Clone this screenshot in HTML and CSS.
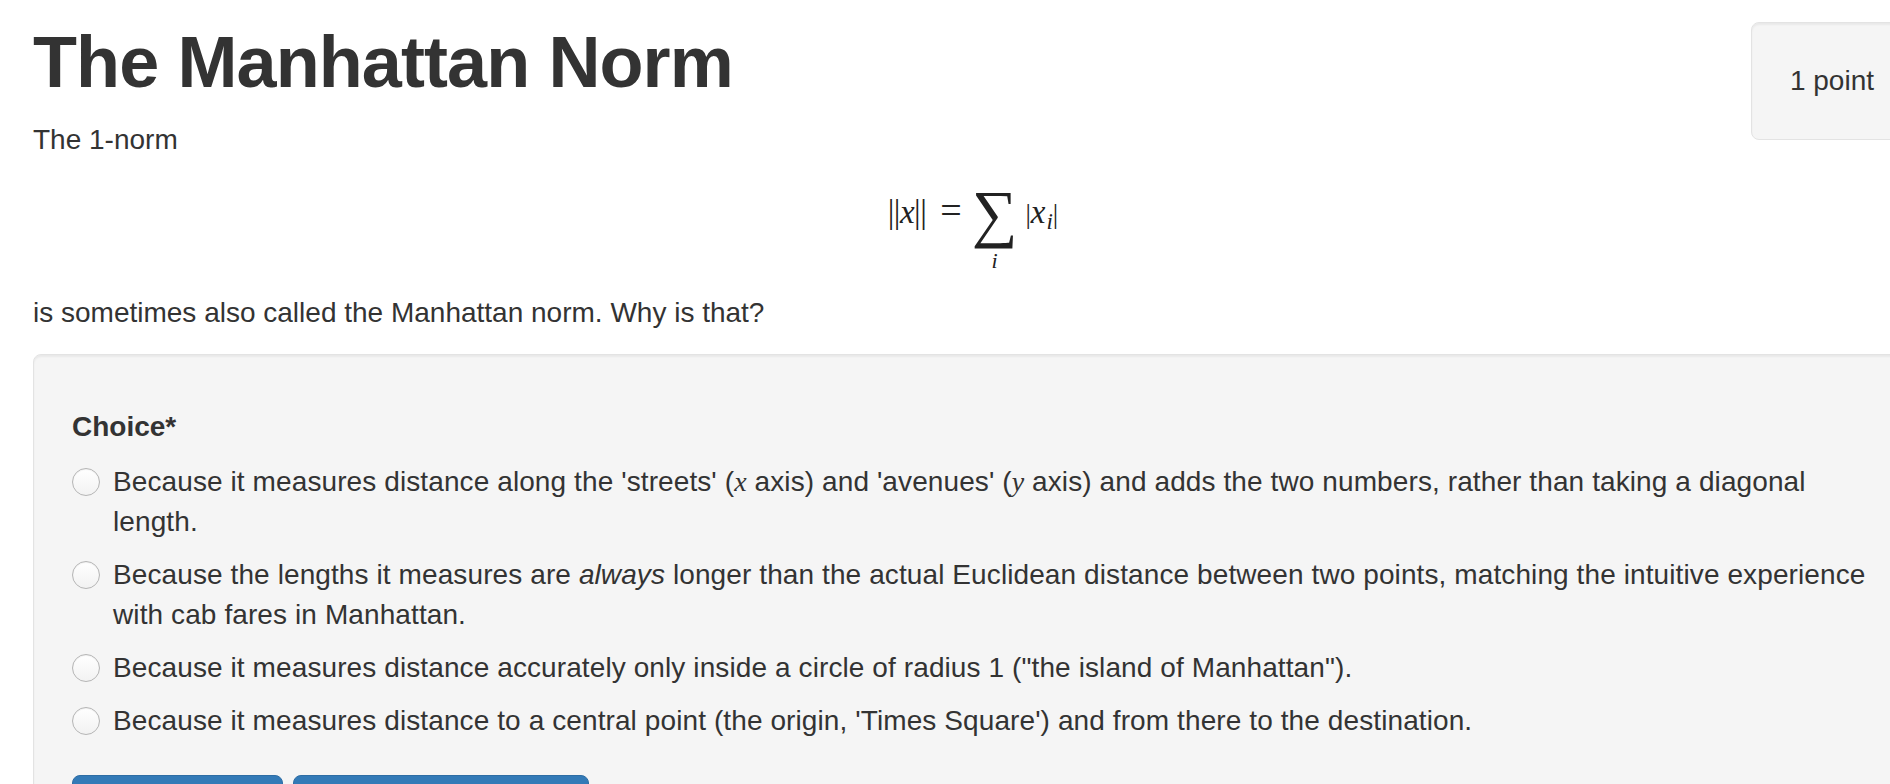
FILE: index.html
```html
<!DOCTYPE html>
<html lang="en">
<head>
    <meta charset="UTF-8">
    <title>The Manhattan Norm</title>
    <link rel="stylesheet" href="styles.css">
</head>
<body>

    <div class="page">
        <div class="points">1 point</div>
        <h1>The Manhattan Norm</h1>

        <p>The 1-norm</p>

        <!-- formula -->
        <div class="formula">
            <span class="math norm">||<i>x</i>||</span>
            <span class="math eq">=</span>
            <span class="sum">
                <span class="sigma">&sum;</span>
                <i class="under">i</i>
            </span>
            <span class="math abs"><span class="bar">|</span><i>x</i><i class="sub">i</i><span class="bar">|</span></span>
        </div>

        <p>is sometimes also called the Manhattan norm. Why is that?</p>

        <div class="well">
            <div class="label">Choice*</div>

            <div class="options">
                <label class="option">
                    <span class="radio"></span>
                    <span class="option-text">Because it measures distance along the 'streets' (<i class="var">x</i> axis) and 'avenues' (<i class="var">y</i> axis) and adds the two numbers, rather than taking a diagonal length.</span>
                </label>
                <label class="option">
                    <span class="radio"></span>
                    <span class="option-text">Because the lengths it measures are <em>always</em> longer than the actual Euclidean distance between two points, matching the intuitive experience with cab fares in Manhattan.</span>
                </label>
                <label class="option">
                    <span class="radio"></span>
                    <span class="option-text">Because it measures distance accurately only inside a circle of radius 1 ("the island of Manhattan").</span>
                </label>
                <label class="option">
                    <span class="radio"></span>
                    <span class="option-text">Because it measures distance to a central point (the origin, 'Times Square') and from there to the destination.</span>
                </label>
            </div>

            <div class="buttons">
                <button class="btn btn-save">Save</button>
                <button class="btn btn-grade">Save &amp; Grade</button>
            </div>
        </div>
    </div>

</body>
</html>
```

FILE: styles.css
```css
body {
    font-family: "Liberation Sans", Arial, sans-serif;
    font-size: 28px;
    line-height: 40px;
    color: #333;
    background-color: #fff;
    margin: 0;
    overflow: hidden;
}

.page {
    width: 1880px;
    padding: 23px 0 0 33px;
}

h1 {
    font-size: 72px;
    line-height: 79px;
    font-weight: 700;
    letter-spacing: -0.9px;
    margin: 0 0 18px;
}

p {
    margin: 0 0 20px;
}

.points {
    float: right;
    margin-top: -1px;
    padding: 38px;
    background-color: #f5f5f5;
    border: 1px solid #e3e3e3;
    border-radius: 8px;
    box-shadow: inset 0 2px 2px rgba(0, 0, 0, 0.05);
}

/* formula */
.formula {
    height: 93px;
    margin-bottom: 20px;
    display: flex;
    justify-content: center;
    align-items: flex-start;
    font-family: "Liberation Serif", "Times New Roman", serif;
    color: #222;
}

.math {
    font-size: 33px;
    line-height: 32px;
    margin-top: 16px;
}

.math i {
    font-style: italic;
}

.norm {
    letter-spacing: -0.5px;
}

.eq {
    font-size: 38px;
    margin-left: 14px;
    margin-right: 10px;
    margin-top: 14px;
}

.sum {
    display: flex;
    flex-direction: column;
    align-items: center;
}

.sigma {
    font-size: 64px;
    line-height: 56px;
    margin-top: 6px;
}

.under {
    font-size: 22px;
    line-height: 22px;
    margin-top: 8px;
}

.abs {
    margin-left: 8px;
}

.bar {
    font-size: 27px;
}

.sub {
    font-size: 23px;
    vertical-align: -6px;
    margin-left: 1px;
}

/* choices */
.well {
    margin-top: 21px;
    padding: 38px;
    min-height: 500px;
    background-color: #f5f5f5;
    border: 1px solid #e3e3e3;
    border-radius: 8px;
    box-shadow: inset 0 2px 2px rgba(0, 0, 0, 0.05);
}

.label {
    font-weight: 700;
    margin-top: 14px;
    margin-bottom: 15px;
}

.options {
    display: flex;
    flex-direction: column;
    gap: 13px;
}

.option {
    display: flex;
    align-items: flex-start;
    cursor: pointer;
}

.radio {
    flex: none;
    width: 26px;
    height: 26px;
    margin-top: 6px;
    border: 1px solid #b5b5b5;
    border-radius: 50%;
    background: linear-gradient(#fff, #f2f2f2);
    box-shadow: inset 0 1px 1px rgba(0, 0, 0, 0.06);
}

.option-text {
    margin-left: 13px;
    letter-spacing: 0.1px;
}

.var {
    font-family: "Liberation Serif", "Times New Roman", serif;
}

.buttons {
    display: flex;
    gap: 10px;
    margin-top: 34px;
}

.btn {
    height: 68px;
    padding: 12px 24px;
    font-family: inherit;
    font-size: 28px;
    color: white;
    background-color: #337ab7;
    border: 1px solid #2e6da4;
    border-radius: 8px;
    cursor: pointer;
}

.btn-save {
    width: 211px;
}

.btn-grade {
    width: 296px;
}
```
